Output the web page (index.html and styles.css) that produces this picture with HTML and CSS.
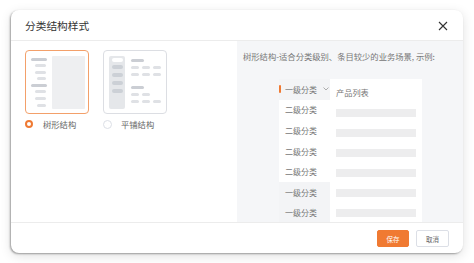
FILE: index.html
```html
<!DOCTYPE html>
<html lang="zh-CN">
<head>
  <meta charset="UTF-8" />
  <meta name="viewport" content="width=device-width, initial-scale=1.0"/>
  <title>分类结构样式</title>
  <link rel="stylesheet" href="styles.css">
</head>
<body>

  <div class="dialog">
    <div class="dialog-header">
      <span class="dialog-title">分类结构样式</span>
      <span class="close-btn">
        <svg width="10" height="10" viewBox="0 0 10 10">
          <path d="M1 1L9 9M9 1L1 9" stroke="#333" stroke-width="1.1" fill="none"/>
        </svg>
      </span>
    </div>

    <div class="dialog-body">
      <div class="style-picker">
        <div class="style-option">
          <div class="style-card active">
            <div class="tree-col">
              <i class="bar head"></i>
              <i class="bar child"></i>
              <i class="bar child"></i>
              <i class="bar child short"></i>
              <i class="bar head"></i>
              <i class="bar child"></i>
              <i class="bar child"></i>
              <i class="bar child short"></i>
            </div>
            <div class="tree-content"></div>
          </div>
          <label class="radio-row">
            <span class="radio checked"></span>
            <span>树形结构</span>
          </label>
        </div>

        <div class="style-option">
          <div class="style-card">
            <div class="flat-col">
              <i class="tab current"></i>
              <i class="tab"></i>
              <i class="tab"></i>
              <i class="tab"></i>
              <i class="tab"></i>
            </div>
            <div class="flat-content">
              <i class="bar head wide"></i>
              <div class="chips"><i></i><i></i><i></i></div>
              <div class="chips"><i></i><i></i><i></i></div>
              <i class="bar head wide gap-top"></i>
              <div class="chips"><i></i><i></i></div>
              <div class="chips"><i></i><i></i><i></i></div>
            </div>
          </div>
          <label class="radio-row">
            <span class="radio"></span>
            <span>平铺结构</span>
          </label>
        </div>
      </div>

      <div class="preview-panel">
        <p class="preview-desc">树形结构-适合分类级别、条目较少的业务场景, 示例:</p>
        <div class="preview">
          <div class="preview-nav">
            <div class="nav-item level1 selected">
              <span class="marker"></span>一级分类
              <svg class="chevron" width="6" height="4" viewBox="0 0 6 4">
                <path d="M0.5 0.5L3 3L5.5 0.5" stroke="#999" stroke-width="0.8" fill="none"/>
              </svg>
            </div>
            <div class="nav-item level2">二级分类</div>
            <div class="nav-item level2">二级分类</div>
            <div class="nav-item level2">二级分类</div>
            <div class="nav-item level2">二级分类</div>
            <div class="nav-item level1">一级分类</div>
            <div class="nav-item level1">一级分类</div>
          </div>
          <div class="preview-list">
            <div class="list-title">产品列表</div>
            <i class="list-bar"></i>
            <i class="list-bar"></i>
            <i class="list-bar"></i>
            <i class="list-bar"></i>
            <i class="list-bar"></i>
            <i class="list-bar"></i>
          </div>
        </div>
      </div>
    </div>

    <div class="dialog-footer">
      <button class="btn primary">保存</button>
      <button class="btn">取消</button>
    </div>
  </div>

</body>
</html>
```

FILE: styles.css
```css
body {
  margin: 0;
  padding: 10px 11px;
  background: #fff;
  font-family: "Noto Sans CJK SC", "Noto Sans", sans-serif;
  color: #333;
}

.dialog {
  width: 452px;
  height: 243px;
  background: #fff;
  border-radius: 8px;
  box-shadow: -1px 1px 2px rgba(0, 0, 0, 0.35), 0 3px 12px rgba(0, 0, 0, 0.12);
  display: flex;
  flex-direction: column;
  overflow: hidden;
}

.dialog-header {
  height: 30px;
  border-bottom: 1px solid #ececec;
  display: flex;
  align-items: center;
  justify-content: space-between;
  padding: 0 14px;
}

.dialog-title {
  font-size: 10.7px;
  line-height: 14px;
  color: #333;
  margin-top: 1px;
}

.close-btn {
  display: flex;
  width: 10px;
  height: 10px;
  margin: 1px 1px 0 0;
}

.dialog-body {
  height: 181px;
  display: flex;
}

/* left: style options */
.style-picker {
  width: 212px;
  padding: 9px 0 0 14px;
  display: flex;
  gap: 14px;
  align-items: flex-start;
}

.style-option {
  display: flex;
  flex-direction: column;
}

.style-card {
  box-sizing: border-box;
  width: 64px;
  height: 64px;
  border: 1.5px solid #dcdee3;
  border-radius: 4px;
  padding: 4.5px 3.5px 4.5px 3.5px;
  display: flex;
}

.style-card.active {
  border-color: #f3a06a;
}

.bar {
  display: block;
  height: 3px;
  border-radius: 2px;
  background: #dfe1e5;
}

.bar.head {
  background: #cbced4;
}

.tree-col {
  width: 16px;
  margin: 2px 5px 0 1.5px;
  display: flex;
  flex-direction: column;
  gap: 3.6px;
}

.tree-col .child {
  margin-left: 4px;
  width: 11px;
}

.tree-col .child.short {
  margin-left: 6px;
  width: 9px;
}

.tree-content {
  flex: 1;
  background: #eeeff1;
  border-radius: 1px;
}

.flat-col {
  width: 16px;
  margin-left: 1.5px;
  background: #e5e7ea;
  border-radius: 2px;
  padding: 2px 2.5px 0;
  box-sizing: border-box;
  display: flex;
  flex-direction: column;
  gap: 3.8px;
}

.tab {
  display: block;
  height: 4px;
  border-radius: 2px;
  background: #ccd0d6;
}

.tab.current {
  background: #fff;
}

.flat-content {
  margin: 3px 0 0 6px;
  display: flex;
  flex-direction: column;
  gap: 4px;
}

.bar.wide {
  width: 13px;
}

.bar.gap-top {
  margin-top: 6px;
}

.chips {
  display: flex;
  gap: 3px;
}

.chips i {
  display: block;
  width: 8px;
  height: 3px;
  border-radius: 2px;
  background: #dfe1e5;
}

.radio-row {
  display: flex;
  align-items: center;
  gap: 9px;
  margin-top: 5px;
  font-size: 8.3px;
  line-height: 10px;
  color: #666;
}

.radio {
  box-sizing: border-box;
  width: 9px;
  height: 9px;
  border: 1px solid #dcdfe6;
  border-radius: 50%;
  background: #fff;
}

.radio.checked {
  width: 8px;
  height: 8px;
  border: 2px solid #ef7a33;
  margin-right: 1px;
}

/* right: preview */
.preview-panel {
  flex: 1;
  background: #f5f6f8;
  padding: 9px 0 0 6px;
  overflow: hidden;
}

.preview-desc {
  margin: 0;
  font-size: 8.3px;
  line-height: 12px;
  color: #777;
  white-space: nowrap;
}

.preview {
  margin: 17px 0 0 36px;
  display: flex;
}

.preview-nav {
  width: 51px;
}

.nav-item {
  position: relative;
  height: 20.6px;
  display: flex;
  align-items: center;
  padding-left: 6px;
  font-size: 8px;
  color: #777;
}

.nav-item.level1 {
  background: #f3f4f6;
}

.nav-item.level2 {
  background: #fff;
}

.marker {
  position: absolute;
  left: 0;
  top: 6px;
  width: 2px;
  height: 8px;
  border-radius: 1px;
  background: #f07a32;
}

.chevron {
  margin-left: 6px;
}

.preview-list {
  width: 92px;
  background: #fff;
  padding: 7px 6px 0;
  box-sizing: border-box;
  display: flex;
  flex-direction: column;
  gap: 12px;
}

.list-title {
  font-size: 8.2px;
  line-height: 12px;
  color: #777;
  margin-bottom: -1px;
}

.list-bar {
  display: block;
  height: 8px;
  background: #ededee;
}

/* footer */
.dialog-footer {
  height: 30px;
  border-top: 1px solid #ececec;
  display: flex;
  align-items: center;
  justify-content: flex-end;
  gap: 7px;
  padding: 0 14px;
}

.btn {
  box-sizing: border-box;
  height: 17px;
  width: 33px;
  padding: 0;
  border: 1px solid #dcdfe6;
  border-radius: 2px;
  background: #fff;
  color: #666;
  font-family: inherit;
  font-size: 6.5px;
  margin-top: 1px;
}

.btn.primary {
  width: 32px;
  background: #f07a32;
  border-color: #f07a32;
  color: #fff;
}
```
